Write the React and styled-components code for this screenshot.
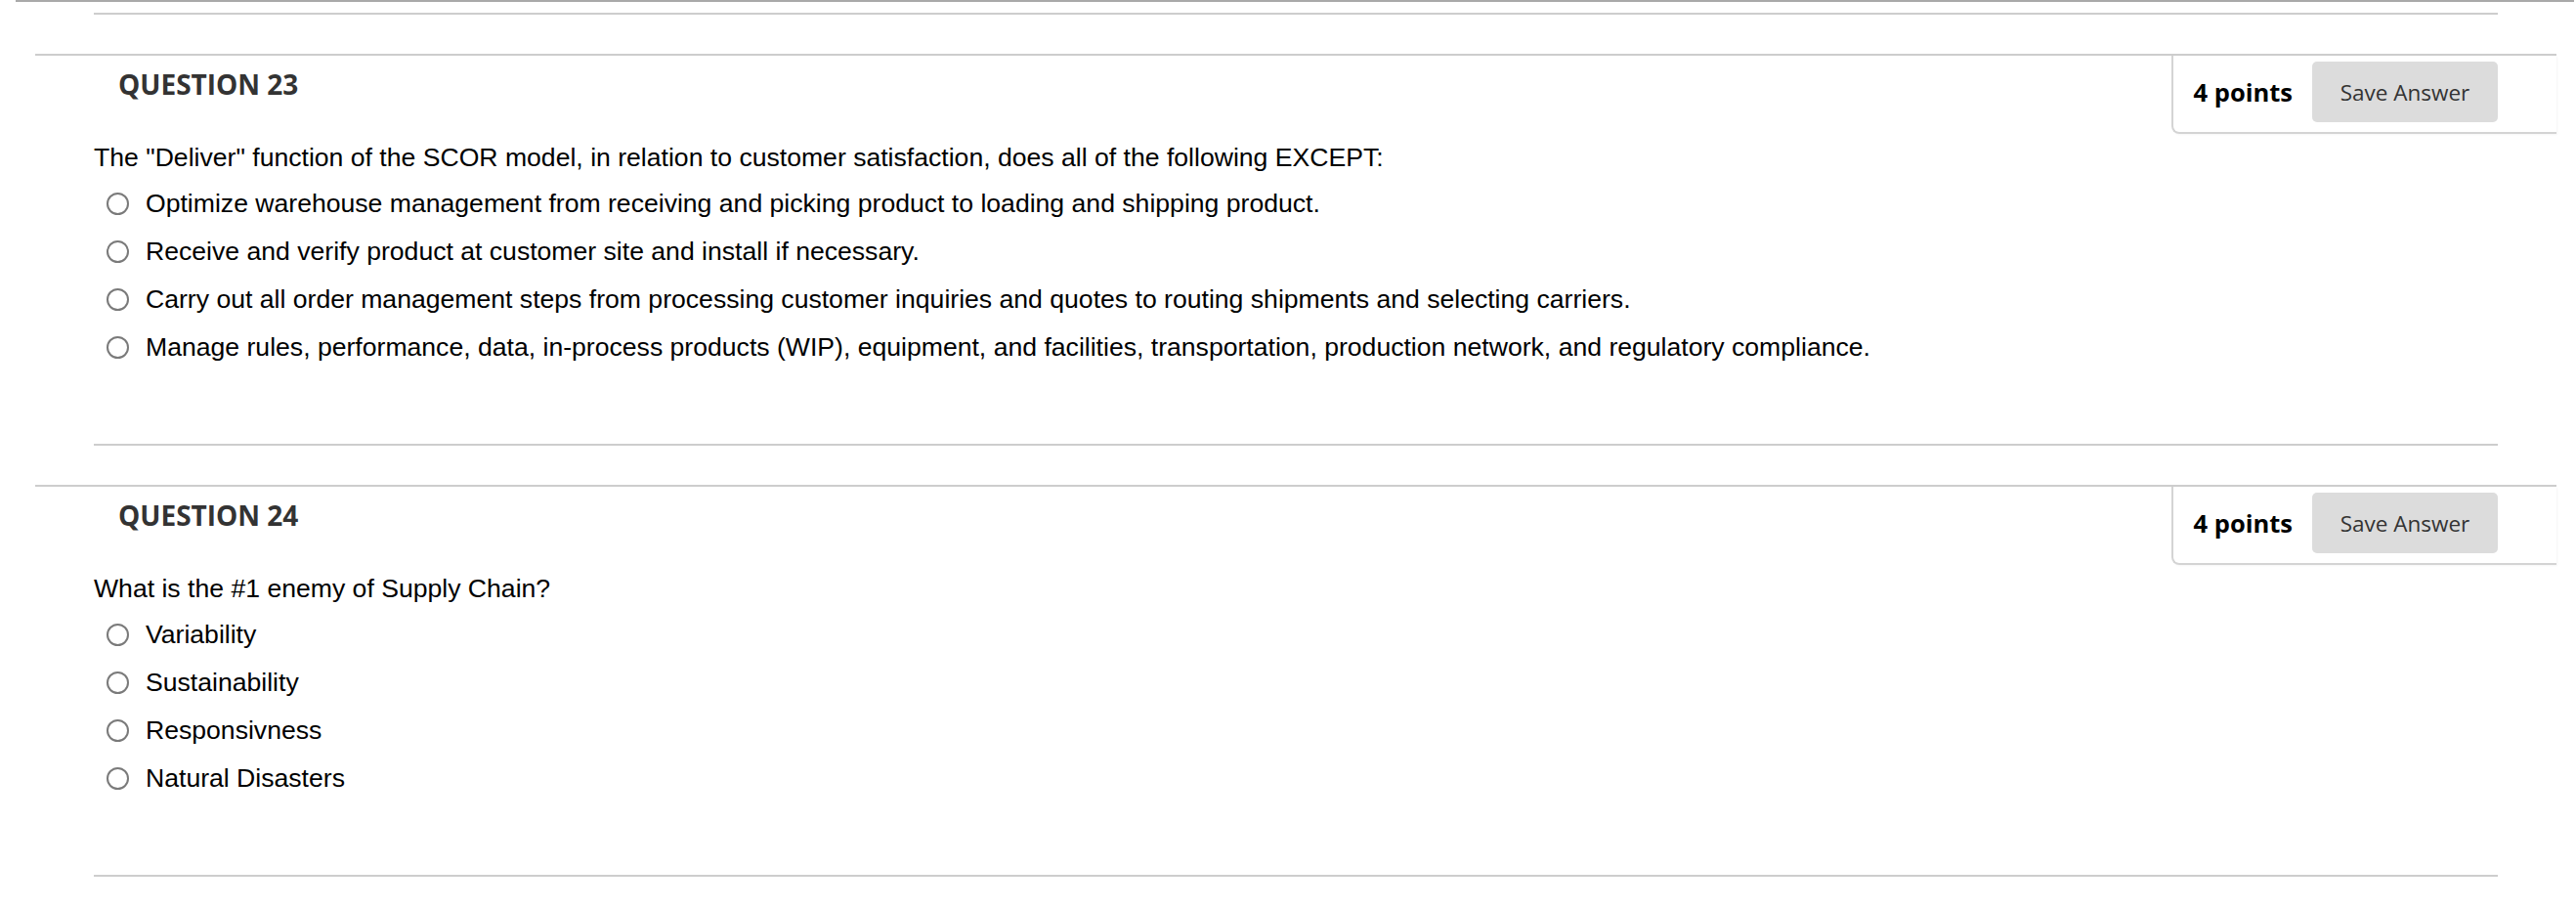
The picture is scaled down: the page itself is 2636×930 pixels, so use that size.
import React from "react";
import styled, { createGlobalStyle } from "styled-components";

const Global = createGlobalStyle`
  html, body { margin: 0; padding: 0; background: #fff; }
  body { font-family: "Liberation Sans", Arial, sans-serif; }
`;

const Page = styled.div`
  width: 2636px;
  min-height: 930px;
  overflow: hidden;
`;

const PrevEdge = styled.div`
  margin: 0 2px 0 16px;
  height: 0;
  border: 2px solid #a9a9a9;
  border-top: none;
`;

const Separator = styled.div`
  height: 2px;
  background: #cdcdcd;
  margin: ${(p) => p.$top || 0}px 80px 0 96px;
`;

const Question = styled.section`
  margin: 40px 20px 0 36px;
  border-top: 2px solid #cdcdcd;
`;

const Header = styled.div`
  display: flex;
  justify-content: space-between;
  align-items: flex-start;
`;

const Title = styled.h3`
  margin: 0;
  padding: 11px 0 0 85px;
  font-family: "Open Sans", sans-serif;
  font-weight: 700;
  font-size: 28px;
  line-height: 36px;
  color: #333;
`;

const PointsBox = styled.div`
  display: flex;
  align-items: center;
  gap: 20px;
  padding: 6px 60px 10px 21px;
  border-left: 2px solid #d4d4d4;
  border-bottom: 2px solid #d4d4d4;
  border-bottom-left-radius: 8px;
  box-shadow: 1px 1px 2px rgba(0, 0, 0, 0.04);
`;

const Points = styled.span`
  font-family: "Open Sans", sans-serif;
  font-weight: 700;
  font-size: 25.5px;
  color: #000;
`;

const SaveButton = styled.button`
  width: 190px;
  height: 62px;
  border: none;
  border-radius: 5px;
  background: #dcdcdc;
  color: #333;
  font-family: "Open Sans", sans-serif;
  font-size: 22.5px;
  padding: 0;
  cursor: pointer;
`;

const Body = styled.div`
  padding: 6px 0 0 60px;
`;

const Prompt = styled.div`
  font-size: 26.6px;
  line-height: 36px;
  color: #000;
`;

const Options = styled.div`
  display: flex;
  flex-direction: column;
  margin: 5px 0 74px 13px;
`;

const Option = styled.label`
  display: flex;
  align-items: center;
  gap: 17px;
  height: 49px;
  font-size: 26.6px;
  color: #000;
`;

const Radio = styled.span`
  width: 19px;
  height: 19px;
  flex: none;
  border-radius: 50%;
  border: 2px solid #7a7a7a;
  background: #fff;
`;

const questions = [
  {
    n: 23,
    prompt:
      'The "Deliver" function of the SCOR model, in relation to customer satisfaction, does all of the following EXCEPT:',
    options: [
      "Optimize warehouse management from receiving and picking product to loading and shipping product.",
      "Receive and verify product at customer site and install if necessary.",
      "Carry out all order management steps from processing customer inquiries and quotes to routing shipments and selecting carriers.",
      "Manage rules, performance, data, in-process products (WIP), equipment, and facilities, transportation, production network, and regulatory compliance.",
    ],
  },
  {
    n: 24,
    prompt: "What is the #1 enemy of Supply Chain?",
    options: ["Variability", "Sustainability", "Responsivness", "Natural Disasters"],
  },
];

export default function App() {
  return (
    <Page>
      <Global />
      <PrevEdge />
      <Separator $top={11} />
      {questions.map((q) => (
        <React.Fragment key={q.n}>
          <Question>
            <Header>
              <Title>QUESTION {q.n}</Title>
              <PointsBox>
                <Points>4 points</Points>
                <SaveButton>Save Answer</SaveButton>
              </PointsBox>
            </Header>
            <Body>
              <Prompt>{q.prompt}</Prompt>
              <Options>
                {q.options.map((o) => (
                  <Option key={o}>
                    <Radio />
                    {o}
                  </Option>
                ))}
              </Options>
            </Body>
          </Question>
          <Separator />
        </React.Fragment>
      ))}
    </Page>
  );
}
